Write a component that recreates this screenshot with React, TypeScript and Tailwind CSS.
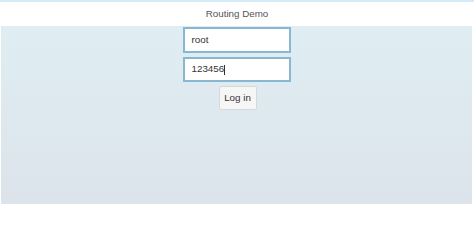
import React from "react";

export default function App() {
  return (
    <div className="w-[474px] h-[207px] bg-white flex flex-col overflow-hidden" style={{ fontFamily: '"Liberation Sans", Arial, sans-serif' }}>
      <div className="h-[2px] bg-[#d3ebf6]" />
      <div className="h-[24px] flex items-center justify-center text-[9.8px] text-[#555]">Routing Demo</div>
      <div className="h-[178px] ml-[1px] mr-[2px] bg-gradient-to-b from-[#dfeef3] to-[#dce3eb] flex flex-col items-center pt-[1px]">
        <div className="w-[108px] h-[26px] border-2 border-[#88b7d2] bg-white flex items-center pl-[7px] text-[9.8px] text-[#333]">root</div>
        <div className="mt-[4px] w-[108px] h-[25px] border-2 border-[#88b7d2] bg-white flex items-center pl-[7px] text-[9.8px] text-[#333]">
          123456<span className="inline-block w-[1px] h-[10px] bg-[#333]" />
        </div>
        <div className="mt-[4px] ml-[2px] w-[38px] h-[24px] border border-[#d8d8d8] bg-[#f6f6f6] rounded-[2px] flex items-center justify-center text-[9.8px] text-[#333]">Log in</div>
      </div>
      <div className="flex-1 bg-white" />
    </div>
  );
}
